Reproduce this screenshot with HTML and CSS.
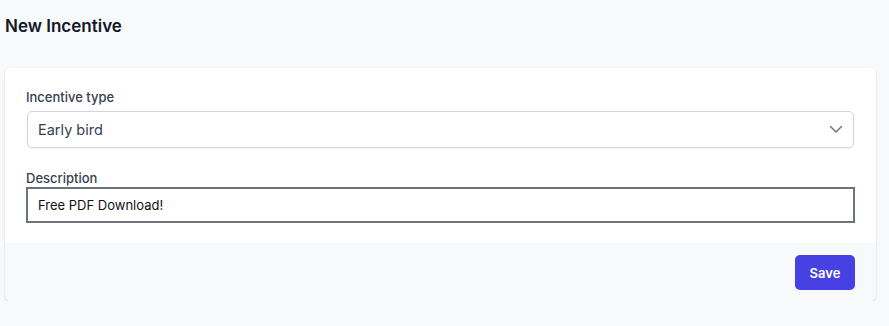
FILE: index.html
```html
<!DOCTYPE html>
<html lang="en">
<head>
    <meta charset="UTF-8">
    <title>New Incentive</title>
    <link rel="stylesheet" href="styles.css">
</head>
<body>
    <div class="page">
        <h1 class="page-title">New Incentive</h1>

        <form class="card">
            <div class="card-body">
                <label for="incentive-type" class="field-label">Incentive type</label>
                <div class="select-wrap">
                    <select id="incentive-type" class="select">
                        <option>Early bird</option>
                    </select>
                    <svg class="chevron" width="20" height="20" viewBox="0 0 20 20" fill="none">
                        <path d="M4.5 7.5l5.5 5.5 5.5-5.5" stroke="currentColor" stroke-width="1.5" stroke-linecap="round" stroke-linejoin="round"/>
                    </svg>
                </div>

                <label for="description" class="field-label label-tight">Description</label>
                <input type="text" id="description" class="text-input" value="Free PDF Download!">
            </div>
            <div class="card-footer">
                <button type="button" class="btn-save">Save</button>
            </div>
        </form>
    </div>
</body>
</html>
```

FILE: styles.css
```css
* {
    box-sizing: border-box;
}
body {
    margin: 0;
    background-color: #f8f9fb;
    font-family: Inter, "Noto Sans", sans-serif;
    color: #111827;
}
.page {
    padding: 14px 13px 0 5px;
}
.page-title {
    margin: 0;
    font-size: 17px;
    line-height: 24px;
    font-weight: 600;
    color: #111827;
}
.card {
    margin-top: 30px;
    background: #fff;
    border-radius: 6px;
    box-shadow: 0 1px 3px rgba(0, 0, 0, 0.1), 0 1px 2px rgba(0, 0, 0, 0.06);
    overflow: hidden;
}
.card-body {
    padding: 19px 21px 20px 21px;
}
.field-label {
    display: block;
    font-size: 13px;
    line-height: 20px;
    font-weight: 500;
    color: #374151;
    margin-bottom: 4px;
}
.label-tight {
    margin-top: 21px;
    margin-bottom: 0;
    line-height: 18px;
}
.select-wrap {
    position: relative;
    margin: 0 1px;
}
.select {
    display: block;
    width: 100%;
    height: 37px;
    padding: 0 40px 0 10px;
    border: 1px solid #d1d5db;
    border-radius: 5px;
    background: #fff;
    font-family: inherit;
    font-size: 14.5px;
    color: #374151;
    appearance: none;
    -webkit-appearance: none;
    box-shadow: 0 1px 2px rgba(0, 0, 0, 0.05);
}
.chevron {
    position: absolute;
    right: 8px;
    top: 8px;
    color: #6b7280;
    pointer-events: none;
}
.text-input {
    display: block;
    width: 100%;
    height: 36px;
    padding: 0 10px;
    border: 2px solid #6b7280;
    border-radius: 0;
    font-family: inherit;
    font-size: 13px;
    color: #111;
    background: #fff;
}
.card-footer {
    background-color: #f8f9fb;
    padding: 12px 21px 11px;
    display: flex;
    justify-content: flex-end;
}
.btn-save {
    width: 60px;
    height: 35px;
    border: none;
    border-radius: 5px;
    background-color: #4740e2;
    color: #fff;
    font-family: inherit;
    font-size: 13px;
    font-weight: 600;
}
```
